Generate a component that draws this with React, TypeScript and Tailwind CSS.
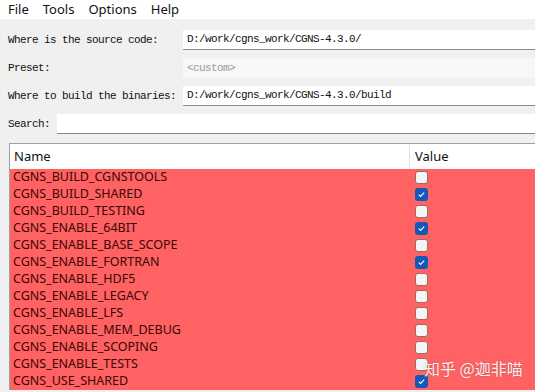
const rows: { name: string; on: boolean }[] = [
  { name: "CGNS_BUILD_CGNSTOOLS", on: false },
  { name: "CGNS_BUILD_SHARED", on: true },
  { name: "CGNS_BUILD_TESTING", on: false },
  { name: "CGNS_ENABLE_64BIT", on: true },
  { name: "CGNS_ENABLE_BASE_SCOPE", on: false },
  { name: "CGNS_ENABLE_FORTRAN", on: true },
  { name: "CGNS_ENABLE_HDF5", on: false },
  { name: "CGNS_ENABLE_LEGACY", on: false },
  { name: "CGNS_ENABLE_LFS", on: false },
  { name: "CGNS_ENABLE_MEM_DEBUG", on: false },
  { name: "CGNS_ENABLE_SCOPING", on: false },
  { name: "CGNS_ENABLE_TESTS", on: false },
  { name: "CGNS_USE_SHARED", on: true },
];

const mono = "font-['Liberation_Mono',monospace] text-[11px] tracking-[-0.6px]";

function Check({ on }: { on: boolean }) {
  if (on) {
    return (
      <span className="w-[13px] h-[13px] rounded-[3px] bg-[#1459b8] flex items-center justify-center">
        <svg viewBox="0 0 10 10" className="w-[9px] h-[9px]" fill="none" stroke="white" strokeWidth="1.2">
          <path d="M2 5.2 4 7.2 8 3" />
        </svg>
      </span>
    );
  }
  return <span className="w-[13px] h-[13px] rounded-[3px] bg-[#f5f5f5] border border-[#9a6a6a]" />;
}

export default function App() {
  return (
    <div className="w-[535px] h-[392px] overflow-hidden bg-[#f0f0f0] relative font-['Noto_Sans',sans-serif] text-[#111]">
      {/* menu */}
      <div className="h-[19px] bg-white flex items-center gap-[14px] pl-[8px] text-[13px] leading-none">
        <span>File</span>
        <span>Tools</span>
        <span>Options</span>
        <span>Help</span>
      </div>

      {/* paths */}
      <div className="pt-[11px] flex flex-col gap-[8px]">
        <div className="flex items-center h-[20px]">
          <span className={`w-[183px] pl-[8px] ${mono}`}>Where is the source code:</span>
          <div className={`flex-1 h-full bg-white border-b border-[#8a8a8a] flex items-center pl-[4px] ${mono}`}>
            D:/work/cgns_work/CGNS-4.3.0/
          </div>
        </div>
        <div className="flex items-center h-[20px]">
          <span className={`w-[183px] pl-[8px] ${mono}`}>Preset:</span>
          <div className={`flex-1 h-full bg-[#f7f7f7] flex items-center pl-[4px] text-[#9a9a9a] ${mono}`}>
            &lt;custom&gt;
          </div>
        </div>
        <div className="flex items-center h-[20px]">
          <span className={`w-[183px] pl-[8px] ${mono}`}>Where to build the binaries:</span>
          <div className={`flex-1 h-full bg-white border-b border-[#8a8a8a] flex items-center pl-[4px] ${mono}`}>
            D:/work/cgns_work/CGNS-4.3.0/build
          </div>
        </div>
        <div className="flex items-center h-[20px]">
          <span className={`w-[57px] pl-[8px] ${mono}`}>Search:</span>
          <div className="flex-1 h-full bg-white border-b border-[#8a8a8a]" />
        </div>
      </div>

      {/* cache table */}
      <div className="mt-[9px] ml-[9px] border-l border-t border-[#a0a0a0]">
        <div className="h-[25px] bg-white flex text-[13px]">
          <div className="w-[400px] pl-[4px] flex items-center border-r border-[#e3e3e3]">Name</div>
          <div className="flex-1 pl-[5px] flex items-center">Value</div>
        </div>
        {rows.map((r) => (
          <div key={r.name} className="h-[17px] bg-[#ff6262] flex text-[12.5px] text-[#3a0505]">
            <div className="w-[401px] pl-[3px] flex items-center leading-none">{r.name}</div>
            <div className="flex-1 pl-[4px] flex items-center">
              <Check on={r.on} />
            </div>
          </div>
        ))}
      </div>

      {/* watermark */}
      <div className="absolute left-[424px] top-[360px] text-[16px] leading-none text-white/90 font-['Noto_Sans_CJK_SC',sans-serif] [text-shadow:0_0_2px_rgba(0,0,0,0.25)]">
        知乎 @迦非喵
      </div>
    </div>
  );
}
